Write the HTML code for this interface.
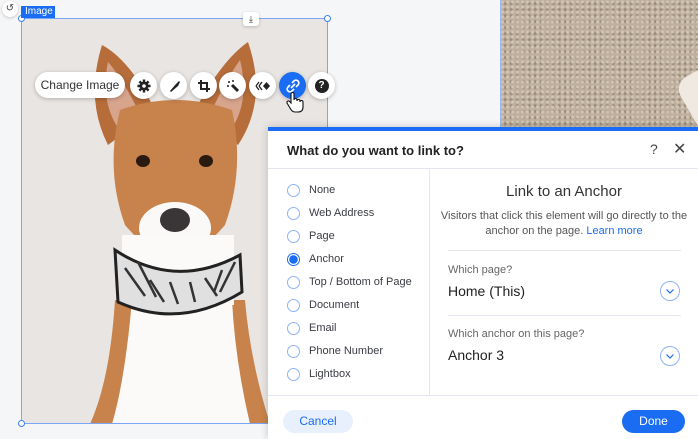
<!DOCTYPE html>
<html><head><meta charset="utf-8"><style>
*{box-sizing:border-box;margin:0;padding:0}
body{width:698px;height:439px;overflow:hidden;background:#f5f6f8;font-family:"Liberation Sans",sans-serif;position:relative}
.abs{position:absolute}
.tb{position:absolute;top:72px;width:27px;height:27px;border-radius:50%;background:#fff;box-shadow:0 1px 4px rgba(0,0,0,.25);display:flex;align-items:center;justify-content:center}
.radio{position:absolute;left:287px;width:13px;height:13px;border:1.5px solid #8fb3f5;border-radius:50%}
.rl{position:absolute;left:309px;font-size:11px;color:#3b3d45}
</style></head><body>
<!-- sand image -->
<div class="abs" style="left:500px;top:0;width:198px;height:130px;background:#bfb09d;border-left:1px solid #9bb8f0;overflow:hidden;background-image:radial-gradient(circle at 30% 40%,#d2c6b6 1px,transparent 2px),radial-gradient(circle at 70% 60%,#9a8c7a 1px,transparent 2px);background-size:5px 5px,6px 6px">
<div class="abs" style="left:185px;top:70px;width:40px;height:60px;background:#efe9e2;transform:rotate(-30deg);border-radius:14px"></div>
</div>
<!-- image -->
<div class="abs" style="left:21px;top:18px;width:307px;height:406px;background:#e9e5e3;overflow:hidden">
<svg width="307" height="406" viewBox="21 18 307 406">
<path d="M102,45 Q85,100 108,145 L155,110 Q130,60 102,45Z" fill="#b66d3a"/>
<path d="M248,42 Q268,100 238,145 L195,110 Q222,60 248,42Z" fill="#b66d3a"/>
<path d="M108,62 Q100,100 118,128 L138,110 Q122,78 108,62Z" fill="#d7a48c"/>
<path d="M240,60 Q250,100 232,128 L212,110 Q227,78 240,60Z" fill="#d7a48c"/>
<path d="M120,110 Q175,90 232,110 Q245,170 225,225 Q200,255 175,255 Q150,255 125,225 Q105,170 120,110Z" fill="#c8834c"/>
<path d="M160,240 Q175,175 190,240Z" fill="#fff"/>
<ellipse cx="175" cy="228" rx="36" ry="26" fill="#fbf9f7"/>
<path d="M115,300 Q110,380 90,424 L270,424 Q250,360 245,300Z" fill="#c8834c"/>
<path d="M132,300 Q125,380 112,424 L250,424 Q235,360 232,300Z" fill="#fbfaf8"/>
<rect x="122" y="235" width="112" height="70" fill="#fbfaf8"/>
<path d="M115,250 Q175,290 240,255 L242,292 Q180,330 118,302Z" fill="#e0e0e0" stroke="#222" stroke-width="3"/>
<path d="M125,268 l20,28 M138,262 l18,35 M150,280 l14,22 M170,282 l8,22 M190,282 l5,20 M205,278 l12,18 M222,270 l-8,22 M235,262 l-15,30" stroke="#333" stroke-width="2.5"/>
<ellipse cx="143" cy="161" rx="7" ry="6" fill="#2b1a10"/>
<ellipse cx="206" cy="161" rx="7" ry="6" fill="#2b1a10"/>
<ellipse cx="175" cy="220" rx="15" ry="12" fill="#3a3536"/>
</svg></div>
<div class="abs" style="left:21px;top:18px;width:307px;height:406px;border:1px solid #7aa6f5"></div>
<div class="abs" style="left:18px;top:15px;width:7px;height:7px;border:1px solid #3d7ff5;border-radius:50%;background:#fff"></div>
<div class="abs" style="left:324px;top:15px;width:7px;height:7px;border:1px solid #3d7ff5;border-radius:50%;background:#fff"></div>
<div class="abs" style="left:18px;top:420px;width:7px;height:7px;border:1px solid #3d7ff5;border-radius:50%;background:#fff"></div>
<div class="abs" style="left:21px;top:6px;width:34px;height:12px;background:#1a6cf2;color:#fff;font-size:10px;line-height:12px;padding-left:4px">Image</div>
<div class="abs" style="left:2px;top:1px;width:16px;height:16px;border-radius:50%;background:#fff;box-shadow:0 1px 3px rgba(0,0,0,.2);font-size:10px;text-align:center;line-height:16px;color:#444">↺</div>
<div class="abs" style="left:243px;top:12px;width:16px;height:14px;border-radius:3px;background:#fff;box-shadow:0 1px 3px rgba(0,0,0,.2);font-size:9px;text-align:center;line-height:14px;color:#333">⤓</div>
<!-- toolbar -->
<div class="abs" style="left:35px;top:72px;width:90px;height:26px;border-radius:13px;background:#fff;box-shadow:0 1px 4px rgba(0,0,0,.25);font-size:12px;color:#333;text-align:center;line-height:26px">Change Image</div>
<div class="tb" style="left:130px"><svg width="14" height="14"><circle cx="7" cy="7" r="4.5" fill="#222"/><path d="M7,0.5 V13.5 M0.5,7 H13.5 M2.4,2.4 L11.6,11.6 M11.6,2.4 L2.4,11.6" stroke="#222" stroke-width="2.4"/><circle cx="7" cy="7" r="1.8" fill="#fff"/></svg></div>
<div class="tb" style="left:160px"><svg width="14" height="14"><path d="M3,12 L9,5 L11,7 L4,13Z M9,5 L12,2 L13,3 L11,7" fill="#222"/></svg></div>
<div class="tb" style="left:190px"><svg width="14" height="14"><path d="M4,1 V10 H13 M1,4 H10 V13" stroke="#222" stroke-width="2" fill="none"/></svg></div>
<div class="tb" style="left:219px"><svg width="14" height="14"><path d="M6,6 L12,12" stroke="#222" stroke-width="3"/><circle cx="3" cy="3" r="1" fill="#222"/><circle cx="7" cy="2" r="1" fill="#222"/><circle cx="2" cy="7" r="1" fill="#222"/></svg></div>
<div class="tb" style="left:249px"><svg width="16" height="12"><path d="M1,6 L4,2 M1,6 L4,10 M4,6 L7,2 M4,6 L7,10" stroke="#222" stroke-width="1.3"/><path d="M8,6 L11.5,2 L15,6 L11.5,10Z" fill="#222"/></svg></div>
<div class="tb" style="left:279px;background:#1a6cf2"><svg width="14" height="14"><path d="M5,9 L9,5 M6,4 L8,2 A2.5,2.5 0 0 1 12,6 L10,8 M8,10 L6,12 A2.5,2.5 0 0 1 2,8 L4,6" stroke="#fff" stroke-width="1.6" fill="none"/></svg></div>
<div class="tb" style="left:308px"><div style="width:14px;height:14px;border-radius:50%;background:#222;color:#fff;font-size:10px;font-weight:bold;text-align:center;line-height:14px">?</div></div>
<svg class="abs" style="left:285px;top:91px" width="20" height="22"><path d="M6,12 V3 a1.5,1.5 0 0 1 3,0 V9 a1.5,1.5 0 0 1 3,0 V10 a1.5,1.5 0 0 1 3,0 V11 a1.5,1.5 0 0 1 3,0 V16 Q18,21 13,21 H10 Q7,21 5,17 L2,12 a1.5,1.5 0 0 1 3,-1Z" fill="#fff" stroke="#111" stroke-width="1.1"/></svg>
<!-- dialog -->
<div class="abs" style="left:268px;top:127px;width:430px;height:312px;background:#fff;box-shadow:0 0 8px rgba(0,0,0,.2);border-top:4px solid #1a6cf2"></div>
<div class="abs" style="left:287px;top:143px;font-size:13px;font-weight:bold;color:#222">What do you want to link to?</div>
<div class="abs" style="left:650px;top:141px;font-size:14px;color:#444">?</div>
<div class="abs" style="left:673px;top:139px;font-size:16px;color:#444">✕</div>
<div class="abs" style="left:268px;top:168px;width:430px;height:1px;background:#e3e6ec"></div>
<div class="abs" style="left:429px;top:169px;width:1px;height:226px;background:#e3e6ec"></div>
<div class="abs" style="left:268px;top:395px;width:430px;height:1px;background:#e3e6ec"></div>
<div class="radio" style="top:184px"></div><div class="rl" style="top:184px">None</div>
<div class="radio" style="top:207px"></div><div class="rl" style="top:207px">Web Address</div>
<div class="radio" style="top:230px"></div><div class="rl" style="top:230px">Page</div>
<div class="radio" style="top:253px;border-color:#1a6cf2;background:radial-gradient(circle,#1a6cf2 4px,#fff 4.5px)"></div><div class="rl" style="top:253px">Anchor</div>
<div class="radio" style="top:276px"></div><div class="rl" style="top:276px">Top / Bottom of Page</div>
<div class="radio" style="top:299px"></div><div class="rl" style="top:299px">Document</div>
<div class="radio" style="top:322px"></div><div class="rl" style="top:322px">Email</div>
<div class="radio" style="top:345px"></div><div class="rl" style="top:345px">Phone Number</div>
<div class="radio" style="top:368px"></div><div class="rl" style="top:368px">Lightbox</div>
<div class="abs" style="left:430px;top:183px;width:268px;text-align:center;font-size:15px;color:#333">Link to an Anchor</div>
<div class="abs" style="left:440px;top:209px;width:248px;text-align:center;font-size:11px;line-height:15px;color:#555">Visitors that click this element will go directly to the anchor on the page. <span style="color:#1a6cf2">Learn more</span></div>
<div class="abs" style="left:448px;top:250px;width:233px;height:1px;background:#e3e6ec"></div>
<div class="abs" style="left:448px;top:264px;font-size:11px;color:#666">Which page?</div>
<div class="abs" style="left:448px;top:283px;font-size:14px;color:#222">Home (This)</div>
<div class="abs" style="left:660px;top:281px;width:20px;height:20px;border:1px solid #8fb3f5;border-radius:50%"><svg width="18" height="18"><path d="M5.5,7.5 L9,11 L12.5,7.5" stroke="#1a6cf2" stroke-width="1.2" fill="none"/></svg></div>
<div class="abs" style="left:448px;top:315px;width:233px;height:1px;background:#e3e6ec"></div>
<div class="abs" style="left:448px;top:328px;font-size:11px;color:#666">Which anchor on this page?</div>
<div class="abs" style="left:448px;top:347px;font-size:14px;color:#222">Anchor 3</div>
<div class="abs" style="left:660px;top:346px;width:20px;height:20px;border:1px solid #8fb3f5;border-radius:50%"><svg width="18" height="18"><path d="M5.5,7.5 L9,11 L12.5,7.5" stroke="#1a6cf2" stroke-width="1.2" fill="none"/></svg></div>
<div class="abs" style="left:283px;top:410px;width:70px;height:23px;border-radius:12px;background:#e8f0fd;color:#1a6cf2;font-size:12px;text-align:center;line-height:23px">Cancel</div>
<div class="abs" style="left:622px;top:410px;width:63px;height:23px;border-radius:12px;background:#1a6cf2;color:#fff;font-size:12px;text-align:center;line-height:23px">Done</div>
</body></html>
